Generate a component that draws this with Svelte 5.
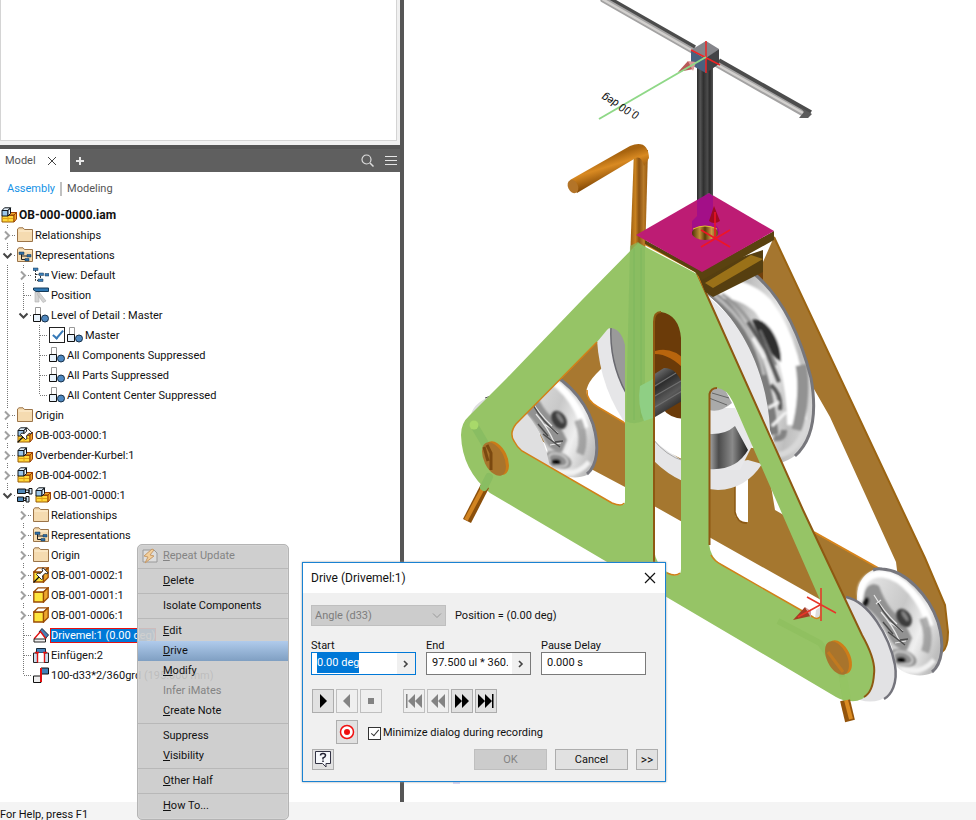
<script>
  import { onMount } from 'svelte';

  let startField;
  onMount(() => {
    startField.focus({ preventScroll: true });
    startField.select();
  });

  const tree = [
    { rails: ['>'], icons: ['folder'], text: 'Relationships' },
    { rails: ['v'], icons: ['reps'], text: 'Representations' },
    { rails: ['|', '>first'], icons: ['view'], text: 'View: Default' },
    { rails: ['|', 't'], icons: ['position'], text: 'Position' },
    { rails: ['|', 'vlast'], icons: ['lod'], text: 'Level of Detail : Master' },
    { rails: ['|', '', 't'], check: true, icons: ['lod'], text: 'Master' },
    { rails: ['|', '', 't'], icons: ['lod'], text: 'All Components Suppressed' },
    { rails: ['|', '', 't'], icons: ['lod'], text: 'All Parts Suppressed' },
    { rails: ['|', '', 'l'], icons: ['lod'], text: 'All Content Center Suppressed' },
    { rails: ['>'], icons: ['folder'], text: 'Origin' },
    { rails: ['>'], icons: ['asmpin'], text: 'OB-003-0000:1' },
    { rails: ['>'], icons: ['asm'], text: 'Overbender-Kurbel:1' },
    { rails: ['>'], icons: ['asm'], text: 'OB-004-0002:1' },
    { rails: ['vlast'], icons: ['flex', 'asm'], text: 'OB-001-0000:1' },
    { rails: ['', '>'], icons: ['folder'], text: 'Relationships' },
    { rails: ['', '>'], icons: ['reps'], text: 'Representations' },
    { rails: ['', '>'], icons: ['folder'], text: 'Origin' },
    { rails: ['', '>'], icons: ['partpin'], text: 'OB-001-0002:1' },
    { rails: ['', '>'], icons: ['part'], text: 'OB-001-0001:1' },
    { rails: ['', '>'], icons: ['part'], text: 'OB-001-0006:1' },
    { rails: ['', 't'], icons: ['angle'], text: 'Drivemel:1 (0.00 deg)', selected: true },
    { rails: ['', 't'], icons: ['insert'], text: 'Einfügen:2' },
    { rails: ['', 'l'], icons: ['mate'], text: '100-d33*2/360grd (195.000 mm)' }
  ];

  const menu = [
    [{ key: 'R', rest: 'epeat Update', off: true, icon: true }],
    [{ key: 'D', rest: 'elete' }],
    [{ key: '', rest: 'Isolate Components' }],
    [
      { key: 'E', rest: 'dit' },
      { key: 'D', rest: 'rive', active: true },
      { key: 'M', rest: 'odify' },
      { key: '', rest: 'Infer iMates', off: true },
      { key: 'C', rest: 'reate Note' }
    ],
    [{ key: '', rest: 'Suppress' }, { key: 'V', rest: 'isibility' }],
    [{ key: 'O', rest: 'ther Half' }],
    [{ key: 'H', rest: 'ow To...' }]
  ];
</script>

{#snippet rail(kind)}
  <svg class="rail" width="16" height="20" viewBox="0 0 16 20" aria-hidden="true">
    {#if kind === '|' || kind === 't' || kind.startsWith('>')}
      <path class="dots" d="M7.500 0V20" />
    {:else if kind !== ''}
      <path class="dots" d="M7.500 0V10" />
    {/if}
    {#if kind !== '|' && kind !== ''}
      <path class="dots" d="M8 10.500H16" />
    {/if}
    {#if kind.startsWith('>')}
      <path d="M3 4h8v13H3z" fill="#fff" /><path d="M5 6.500l4 4-4 4" fill="none" stroke="#a0a0a0" stroke-width="2" />
    {:else if kind.startsWith('v')}
      <path d="M2 6h11v9H2z" fill="#fff" /><path d="M3.500 8.500l4 4 4-4" fill="none" stroke="#454545" stroke-width="2" />
    {/if}
  </svg>
{/snippet}

{#snippet icon(name)}
  <svg class="icon" width="16" height="16" viewBox="0 0 16 16" aria-hidden="true">
    {#if name === 'folder' || name === 'reps'}
      <path d="M.5 14.500V2L2 .8H6L7.500 2.500H15.500V14.500Z" fill="#f5dbb0" stroke="#9b7449" />
      <path d="M1.500 4H15" stroke="#fff0d4" />
    {/if}
    {#if name === 'reps'}
      <path d="M4.500 7V12.500H9M4.500 9H10" fill="none" stroke="#222" />
      <path d="M2 5h5v2.500H2zM10 7.500h4v2.500h-4zM8 11.500h4V14H8z" fill="#2c6ca5" stroke="#17344e" stroke-width=".5" />
    {:else if name === 'view'}
      <path d="M2.500 3V13.500H7M2.500 7.500H7M7.500 6V12" fill="none" stroke="#333" stroke-dasharray="2 1" />
      <path d="M0 1h5v2.500H0zM6 6h4.500v2.500H6zM12 6.500h4v2.500h-4zM5 12h5v2.500H5z" fill="#3c7fb9" stroke="#17344e" stroke-width=".5" />
    {:else if name === 'position'}
      <path d="M2 5h4v10H2zM6 5l7 9-3 1.500L4 7z" fill="#d4d4d4" stroke="#b0b0b0" stroke-width=".6" />
      <path d="M.5 1H15.500V4.500H3L.5 3z" fill="#2f78b4" stroke="#163a58" />
    {:else if name === 'lod'}
      <path d="M2.500 .5h5v7h-5z" fill="#fff" stroke="#999" />
      <path d="M.5 7.500h7v7h-7z" fill="#e8f2fb" stroke="#111" />
      <circle cx="12" cy="11.500" r="3.500" fill="#4f88c0" stroke="#16304a" />
    {:else if name === 'asm' || name === 'asmpin'}
      <path d="M1 8.500h12V15H1z" fill="#ffd83a" stroke="#9a5a05" /><path d="M7 9v6M1.500 11.500h11" stroke="#e0a015" />
      <path d="M8 8l2-2.500h5.500L13 8zM13 8l2.500-2.500V12L13 15z" fill="#f0a92c" stroke="#9a3f05" />
      <path d="M1 3.500h6V9H1z" fill="#9cc7ea" stroke="#10161c" /><path d="M1 3.500L3.500.8H9.500L7 3.500zM7 3.500L9.500.8V6.500L7 9z" fill="#e5f1fb" stroke="#10161c" />
    {:else if name === 'part' || name === 'partpin'}
      <path d="M.8 5h9.700v10H.8z" fill="#fde53c" stroke="#9a4b05" stroke-width="1.300" />
      <path d="M.8 5L5 .8h10.200L10.500 5z" fill="#fff" stroke="#9a4b05" stroke-width="1.300" />
      <path d="M10.500 5L15.200.8V10.500L10.500 15z" fill="#eca72e" stroke="#9a4b05" stroke-width="1.300" />
    {:else if name === 'flex'}
      <path d="M.5 2h8v4.500h-8zM.5 10h6v4.500h-6z" fill="#4e87b9" stroke="#111" />
      <path d="M8.500 3H12V5.500H8.500zM6.500 11H9V13.500H6.500zM12 1.500h3V7H12zM9 9.500h3V15H9z" fill="#c9dff2" stroke="#111" />
    {:else if name === 'angle'}
      <path d="M6 5L9 1.500 15.500 8 12 12z" fill="#4a7fb5" stroke="#17283c" />
      <path d="M1 12L7.500 4.500 13 12" fill="#fff" stroke="#e01010" stroke-width="1.400" /><path d="M1 12h11.500v3H1z" fill="#eee" stroke="#222" />
    {:else if name === 'insert'}
      <path d="M.5 6h15v9.500H.5z" fill="#c9ddee" stroke="#222" /><path d="M3.500 1.500h9V6h-9z" fill="#4684bc" stroke="#15293c" />
      <path d="M5 6h6v9.500H5z" fill="#fff" /><path d="M4.500 5.500v10M11.500 5.500v10M2 5.500h4M10 5.500h4" stroke="#e01010" stroke-width="1.400" />
    {:else if name === 'mate'}
      <path d="M8 1h7.500v6H8z" fill="#3e80b8" stroke="#111" /><path d="M.5 9H8v6.500H.5z" fill="#eee" stroke="#111" />
      <path d="M8 1V15" stroke="#e01010" stroke-width="2" />
    {/if}
    {#if name.endsWith('pin')}
      <path d="M.5 15.500L6 10" stroke="#111" stroke-width="1.300" />
      <path d="M10 .8l5.200 5.200-2 .8-1-.6L9.500 9l.5 2.500-1.500 1L3.500 7.500l1.200-1.500 2.500.5L9.800 4 9.200 2.500z" fill="#fff" stroke="#222" />
    {/if}
  </svg>
{/snippet}

{#snippet smallWheel()}
  <path d="M857 602C856 580 868 568 882 568.500C906 570 927 594 937 622C944 643 943 662 932 673C921 678 905 675 897 667C893 640 880 618 857 602Z" fill="url(#chromeSmall)" />
  <g filter="url(#soft)">
    <path d="M862 600C857 583 869 573 883 574C904 577 922 600 930 626" fill="none" stroke="#fff" stroke-width="7" />
    <path d="M903 668Q920 676 934 660" fill="none" stroke="#f2f2f2" stroke-width="5" />
    <path d="M864 606C861 590 870 580 879 586Q884 600 892 610Q905 622 912 638L907 650Q894 650 888 634Q879 616 864 606Z" fill="#929292" />
    <ellipse cx="904" cy="618" rx="7" ry="10" fill="#3c3c3c" transform="rotate(-32 904 618)" />
    <ellipse cx="905" cy="616" rx="2" ry="6" fill="#858585" transform="rotate(-32 905 616)" />
    <ellipse cx="903" cy="658" rx="14" ry="8" fill="#8e8e8e" transform="rotate(20 903 658)" />
    <ellipse cx="903" cy="658" rx="10" ry="6" fill="none" stroke="#ddd" stroke-width="1.500" transform="rotate(20 903 658)" />
    <ellipse cx="901" cy="660" rx="5" ry="3" fill="#111" />
    <path d="M923 618Q931 636 925 652" fill="none" stroke="#868686" stroke-width="8" opacity=".65" />
    <ellipse cx="866" cy="602" rx="3" ry="5" fill="#161616" transform="rotate(20 866 602)" />
  </g>
  <path d="M874 595Q884 612 897 624M881 612Q893 626 899 640M889 622L903 631M895 643L906 641M876 604L881 600" fill="none" stroke="#e6e6e6" stroke-width="1.200" />
  <path d="M878 603Q887 619 903 632M888 632L905 645M883 622L893 634M900 640L908 639" fill="none" stroke="#4b4b4b" stroke-width="1.400" />
  <path d="M873 570Q878 568 882 569C906 570 929 596 938 622C945 645 942 664 932 672" fill="none" stroke="#77777e" stroke-width="3" />
{/snippet}

<div class="app">
  <aside class="side">
    <div class="blank"><div class="sheet"></div></div>
    <header class="tabs">
      <div class="tab">Model
        <button class="bare" aria-label="Close Model"><svg width="10" height="10" viewBox="0 0 10 10"><path d="M1 1l8 8M9 1L1 9" stroke="#444" /></svg></button>
      </div>
      <button class="bare plus" aria-label="Add panel"><svg width="10" height="10" viewBox="0 0 10 10"><path d="M5 1v8M1 5h8" stroke="#e6e6e6" stroke-width="2" /></svg></button>
      <span class="grow"></span>
      <button class="bare" aria-label="Search"><svg width="13" height="13" viewBox="0 0 13 13"><circle cx="5.500" cy="5.500" r="4.500" fill="none" stroke="#ddd" stroke-width="1.200" /><path d="M9 9l3.500 3.500" stroke="#ddd" stroke-width="1.500" /></svg></button>
      <button class="bare list" aria-label="Panel menu"><svg width="12" height="10" viewBox="0 0 12 10"><path d="M0 .5h12M0 4.500h12M0 8.500h12" stroke="#e6e6e6" /></svg></button>
    </header>
    <nav class="modes"><a class="on" href="#assembly">Assembly</a><i></i><a href="#modeling">Modeling</a></nav>

    <ul class="tree">
      <li class="row root">{@render icon('asm')}<span class="text">OB-000-0000.iam</span></li>
      {#each tree as node}
        <li class="row">
          {#each node.rails as kind}{@render rail(kind)}{/each}
          {#if node.check}<input class="tick blue" type="checkbox" checked aria-label="Master active" />{/if}
          {#each node.icons as name}{@render icon(name)}{/each}
          <span class="text" class:selected={node.selected}>{node.text}</span>
        </li>
      {/each}
    </ul>
  </aside>

  <div class="splitter"></div>

  <main class="view">
    <svg width="572" height="801" viewBox="404 0 572 801" role="img" aria-label="Bender assembly">
      <defs>
        <linearGradient id="chromeSmall" x1="0" y1=".2" x2="1" y2=".7"><stop offset="0" stop-color="#e8e8e8" /><stop offset=".5" stop-color="#c8c8c8" /><stop offset=".75" stop-color="#efefef" /><stop offset="1" stop-color="#bdbdbd" /></linearGradient>
        <linearGradient id="chromeBig" x1="0" y1=".3" x2="1" y2=".6"><stop offset="0" stop-color="#777" /><stop offset=".35" stop-color="#c4c4c4" /><stop offset=".6" stop-color="#e9e9e9" /><stop offset=".8" stop-color="#bebebe" /><stop offset="1" stop-color="#d9d9d9" /></linearGradient>
        <linearGradient id="post"><stop offset="0" stop-color="#292929" /><stop offset=".2" stop-color="#555" /><stop offset=".4" stop-color="#303030" /><stop offset=".65" stop-color="#4b4b4b" /><stop offset=".8" stop-color="#2c2c2c" /><stop offset="1" stop-color="#555" /></linearGradient>
        <linearGradient id="crank"><stop offset="0" stop-color="#9a5c10" /><stop offset=".3" stop-color="#c98220" /><stop offset=".5" stop-color="#8a5212" /><stop offset=".75" stop-color="#b87a28" /><stop offset="1" stop-color="#9a5a0c" /></linearGradient>
        <linearGradient id="arm" x1=".4" y1=".3" x2=".6" y2=".7"><stop offset="0" stop-color="#a8640f" /><stop offset=".4" stop-color="#d98a22" /><stop offset="1" stop-color="#8a4e08" /></linearGradient>
        <linearGradient id="axle" x1="0" y1="0" x2=".6" y2="1"><stop offset="0" stop-color="#222" /><stop offset=".25" stop-color="#666" /><stop offset=".45" stop-color="#2d2d2d" /><stop offset=".7" stop-color="#5a5a5a" /><stop offset="1" stop-color="#222" /></linearGradient>
        <linearGradient id="hub"><stop offset="0" stop-color="#aaa" /><stop offset=".25" stop-color="#4c4c4c" /><stop offset=".6" stop-color="#8a8a8a" /><stop offset=".85" stop-color="#444" /><stop offset="1" stop-color="#222" /></linearGradient>
        <linearGradient id="bore"><stop offset="0" stop-color="#4c3306" /><stop offset=".3" stop-color="#c39037" /><stop offset=".5" stop-color="#5a3b08" /><stop offset=".75" stop-color="#cc9a45" /><stop offset="1" stop-color="#6a480d" /></linearGradient>
        <filter id="soft" x="-20%" y="-20%" width="140%" height="140%"><feGaussianBlur stdDeviation="1.200" /></filter>
        <clipPath id="bigWheel"><path d="M707 294L752 272C781 295 800 335 811 378C817 412 813 448 788 460L781 463 770 430C768 380 746 325 707 294Z" /></clipPath>
      </defs>

      <!-- rear plate -->
      <path d="M540 400L598 341 625 310V487L593 470 540 440Z" fill="#a87830" />
      <path d="M625 345L600 370Q582 387 588 397Q591 403 600 408L625 423Z" fill="#fff" />
      <path d="M587 390Q586 400 598 407L625 423" fill="none" stroke="#d8841a" stroke-width="1.500" />
      <path d="M640 430L765 450 775 510 815 533 878 568 898 580 860 622 709 537 654 506 640 497Z" fill="#a5772f" />
      <path d="M814 532L880 569" stroke="#d8841a" stroke-width="2" />
      <path d="M735 480V515Q738 524 748 522V475Z" fill="#fff" /><path d="M735 480V512Q737 523 747 523" fill="none" stroke="#8b5812" stroke-width="1.500" />
      <path d="M763 262L774 237 925 558 945 605 948 632Q948 648 940 654L880 600 878 570 898 578 896 562 830 417 763 300Z" fill="#a5762f" />
      <path d="M774 237L925 558 945 605 948 632Q948 648 942 652" fill="none" stroke="#9b6412" stroke-width="2" />
      <path d="M757 262L763 258V300L757 300Z" fill="#71400c" />

      <!-- left wheel -->
      <path d="M470 418Q472 404 489 397L495 410 480 425Z" fill="#dedee0" /><path d="M485 398l6-2" stroke="#555" />
      <g transform="translate(-345 -198)">{@render smallWheel()}</g>
      <path d="M510 442L510 428 527 414Q545 436 550 468L525 458Z" fill="#dfdfe0" />

      <!-- main wheel -->
      <path d="M597 340L611 326 630 330V430Q600 390 597 340Z" fill="#e6e6e8" />
      <path d="M611 325Q609 362 626 393V325Z" fill="#9a9a9a" stroke="#6a6a70" stroke-width="1.500" />
      <path d="M654 439Q670 452 681 460L709 467 748 460 762 464Q746 489 718 490Q680 487 654 461Z" fill="#e5e5e7" />
      <path d="M650 418L690 412V462Q668 455 652 438Z" fill="#fff" /><path d="M652 438Q666 456 684 461" fill="none" stroke="#aaa" />
      <path d="M705 408H735L745 428 755 440 740 470H705Z" fill="#e8e8ea" />
      <path d="M709 434Q725 435 735 426L748 450Q736 471 709 469Z" fill="url(#hub)" />
      <path d="M709 388H724L732 403Q720 413 709 410Z" fill="#aaa" /><path d="M709 398L727 405M712 393L729 398" stroke="#666" />
      <path d="M706 295Q745 325 762 375Q770 405 770 440L758 425Z" fill="#e8e8ea" />
      <g clip-path="url(#bigWheel)">
        <path d="M700 265H820V470H700Z" fill="url(#chromeBig)" />
        <g filter="url(#soft)">
          <path d="M716 288Q745 288 763 306Q796 350 797 425" fill="none" stroke="#fff" stroke-width="20" />
          <path d="M801 365Q806 395 797 430" fill="none" stroke="#929292" stroke-width="11" />
          <path d="M708 295C744 321 764 368 771 435" fill="none" stroke="#7b7b7b" stroke-width="15" />
          <path d="M714 295C740 315 757 340 764 375" fill="none" stroke="#bfbfbf" stroke-width="3" />
          <path d="M722 294Q745 308 763 345" fill="none" stroke="#979797" stroke-width="3" />
          <path d="M752 320C768 316 782 343 781 362C772 356 760 340 752 320Z" fill="#2e2e2e" />
          <path d="M748 322L766 350 779 382M771 385Q782 395 780 410" fill="none" stroke="#555" stroke-width="4" />
          <path d="M760 330L776 365" stroke="#777" stroke-width="2" />
          <path d="M753 338L764 358M768 408L779 402M772 426L786 412" stroke="#f5f5f5" stroke-width="3" />
          <path d="M774 438Q784 440 784 430" fill="none" stroke="#828282" stroke-width="6" />
          <path d="M778 455Q800 452 808 420" fill="none" stroke="#d8d8d8" stroke-width="6" />
        </g>
      </g>
      <path d="M752 272C781 295 800 335 811 378C817 412 813 440 795 456" fill="none" stroke="#77777c" stroke-width="3" />

      <!-- right wheel -->
      {@render smallWheel()}
      <path d="M846 597C869 602 889 635 895 665C898 684 891 695 880 700Q870 703 860 700L840 650Z" fill="#e2e2e4" />
      <path d="M846 597C869 602 889 635 895 665C898 684 891 695 884 699" fill="none" stroke="#74747c" stroke-width="2.500" />

      <!-- shaft behind the centre slot -->
      <path d="M650 305H685V419Q670 419 662 408L650 400Z" fill="#6b3b09" />
      <path d="M655 351Q672 346 686 361V371Q670 354 655 354Z" fill="#b8650d" />
      <path d="M640 383L664 368Q677 368 682 384V401L650 420Q638 418 640 383Z" fill="url(#axle)" />
      <path d="M645 392L676 373M648 400L681 381M650 410L682 391" stroke="#707070" stroke-width="1.200" />
      <path d="M816 610L820 607V619H815Z" fill="#ddd" />

      <!-- lifting crank -->
      <path d="M634 150H648L645 260H630Z" fill="url(#crank)" />
      <path d="M570 180L630 146Q648 139 649 158L644 166Q641 154 634 159L577 193Z" fill="url(#arm)" />
      <ellipse cx="573" cy="186.500" rx="5" ry="7" fill="#b37428" transform="rotate(-25 573 186.500)" />

      <!-- front plate -->
      <path fill-rule="evenodd" fill="#96c466" d="M638 243L697 274 710 301 803 510 862 635Q876 660 874 674Q872 703 850 701Q843 701 836 697L490 493Q462 470 461 435Q461 423 469 416L506 379 582 300Z
        M607 330L597 342 516 424Q509 433 514 441Q517 447 522 451L612 503Q625 508 625 501V345Q621 329 611 328Q608 328 607 330Z
        M654 322V550Q656 565 667 572Q681 580 681 569V338Q679 315 661 312Q654 312 654 322Z
        M709 394V543Q710 558 722 565L813 617Q820 620 820 613V600L733 402Q726 388 717 388Q709 387 709 394Z" />
      <path d="M597 342L516 424Q509 433 514 441Q517 447 522 451L612 503Q622 507 624 503M667 573Q676 577 680 573M711 555Q714 561 722 565L813 617Q817 620 820 617" fill="none" stroke="#d18019" stroke-width="1.500" />
      <path d="M654 566V322Q654 312 661 312M709.500 545V394Q711 388 717 388M697 273L803 510 862 635Q876 660 874 674Q873 692 864 697" fill="none" stroke="#8e5912" stroke-width="2" />
      <path d="M645 244L697 272 706 292" fill="none" stroke="#d8841a" stroke-width="2" />
      <path d="M630 246L638 242 645 247V420Q635 426 626 421Z" fill="#84bb60" opacity=".7" /><path d="M634 248V420M641 248V418" stroke="#79b55d" opacity=".7" />
      <path d="M640 386L653 379V418L644 421Q637 405 640 386Z" fill="#8fcf84" />

      <!-- pins and handles -->
      <path d="M485 486L467 521" stroke="#8b4f0b" stroke-width="9" /><path d="M484 486L466 520" stroke="#d28421" stroke-width="4" />
      <path d="M474 425L487 447M489 477L484 487" stroke="#89bd62" stroke-width="8" stroke-linecap="round" /><circle cx="474" cy="425" r="4.500" fill="#a8d96a" />
      <ellipse cx="497" cy="458" rx="10" ry="18" fill="#cb7c18" transform="rotate(-26 497 458)" /><ellipse cx="494" cy="459" rx="10" ry="18" fill="#a8742c" transform="rotate(-26 494 459)" />
      <path d="M487 445L491 453V470M484 447L488 461" fill="none" stroke="#7a4910" stroke-width="3" />
      <path d="M778 621L820 643 842 675 846 700" fill="none" stroke="#90c060" stroke-width="6" />
      <ellipse cx="840" cy="657" rx="10" ry="18" fill="#ce7d18" transform="rotate(-26 840 657)" /><ellipse cx="837" cy="658" rx="10" ry="18" fill="#a8742c" transform="rotate(-26 837 658)" />
      <path d="M828 652L843 672" stroke="#c17a20" stroke-width="3" />
      <path d="M845 700L850 721" stroke="#94540b" stroke-width="10" /><path d="M846 700L851 719" stroke="#db8b22" stroke-width="4" /><path d="M843 677L847 700" stroke="#94c463" stroke-width="8" />

      <!-- top block -->
      <path d="M697 272L763 250V272L713 297 705 292Z" fill="#563f10" /><path d="M705 283L751 255 763 259 713 288Z" fill="#9a7118" />
      <path d="M645 240L702 271 774 231V240L702 280 695 272 645 244Z" fill="#5a4210" />
      <path d="M709 193L774 231 702 272 636 235Z" fill="#bd1c74" />
      <path d="M697 198L709 193 713 196V223Q722 229 718 235H692V221L697 216Z" fill="#a30f88" />
      <ellipse cx="705" cy="233" rx="13" ry="7" fill="url(#bore)" /><path d="M693 229Q705 223 717 229" fill="none" stroke="#e0c52e" />
      <path d="M714 206L709 221Q714 225 720 221Z" fill="#a00a20" />
      <path d="M715 212V238M701 230L730 247M701 247L730 230" stroke="#f01525" stroke-width="1.500" />

      <!-- post, cross bar and knob -->
      <path d="M697 65H713V196L709 193 697 200Z" fill="url(#post)" />
      <path d="M601 -4L694 49M718 62L810 114" stroke="#4c4c4c" stroke-width="8" />
      <path d="M602 -1L693 51M716 64L804 114" stroke="#a3a2a2" stroke-width="6" /><path d="M602 -1L693 51M716 64L803 113" stroke="#d2d0ce" stroke-width="2.500" />
      <path d="M800 107L812 114 808 118H799L804 112Z" fill="#5b5b5b" />
      <path d="M706 41L719 49 706 59 691 50Z" fill="#85858a" /><path d="M691 50L706 59V73L691 65Z" fill="#49617f" /><path d="M719 49V64L706 73V58Z" fill="#434347" />
      <path d="M678 72L688 61 694 69Z" fill="#b85858" /><path d="M688 61L696 62 693 71Z" fill="#dc9797" />
      <path d="M706 41V73M691 50L720 65" stroke="#f12424" stroke-width="1.500" />
      <path d="M706 57L599 119" stroke="#8fd887" stroke-width="2" />
      <text x="0" y="0" transform="translate(640 113) rotate(209)" font-size="11" font-style="italic" fill="#111">0.00 deg</text>

      <!-- joint marker -->
      <path d="M793 620L805 607 811 616Z" fill="#a43c23" /><path d="M805 607L811 611V618Z" fill="#d59c9c" />
      <path d="M821 588V621M807 597L836 613M820 605L798 617" stroke="#e73529" stroke-width="1.500" />
      <path d="M453 783H460" stroke="#b5b3f0" />
    </svg>
  </main>

  <footer class="status">For Help, press F1</footer>

  <div class="menu" role="menu">
    {#each menu as group}
      <div class="group">
        {#each group as item}
          <button class="item" class:active={item.active} role="menuitem" disabled={item.off}>
            {#if item.icon}
              <svg class="bolt" width="16" height="16" viewBox="0 0 16 16" aria-hidden="true"><path d="M1 2h11l3 3v9H1z" fill="#ddd" stroke="#999" /><path d="M10 1L2 8l4 1-3 6 9-7-4-1 4-5z" fill="#f3cf9a" stroke="#c79a68" /></svg>
            {/if}
            <u>{item.key}</u>{item.rest}
          </button>
        {/each}
      </div>
    {/each}
  </div>

  <form class="dialog" onsubmit={(e) => e.preventDefault()}>
    <div class="title">Drive (Drivemel:1)
      <button type="button" class="bare" aria-label="Close"><svg width="12" height="12" viewBox="0 0 12 12"><path d="M1 1l10 10M11 1L1 11" stroke="#111" stroke-width="1.200" /></svg></button>
    </div>
    <div class="body">
      <div class="line">
        <span class="combo">
          <select disabled aria-label="Driven parameter"><option>Angle (d33)</option></select>
          <svg width="10" height="6" viewBox="0 0 10 6" aria-hidden="true"><path d="M1 .5l4 4 4-4" fill="none" stroke="#999" /></svg>
        </span>
        <span>Position = (0.00 deg)</span>
      </div>
      <div class="line fields">
        <div class="field"><label for="start">Start</label>
          <div class="box focus"><input id="start" bind:this={startField} value="0.00 deg" /><button type="button" aria-label="Start options"><svg width="6" height="8" viewBox="0 0 6 8"><path d="M1 1l3 3-3 3" fill="none" stroke="#444" stroke-width="1.600" /></svg></button></div>
        </div>
        <div class="field"><label for="end">End</label>
          <div class="box"><input id="end" value="97.500 ul * 360.00 deg" /><button type="button" aria-label="End options"><svg width="6" height="8" viewBox="0 0 6 8"><path d="M1 1l3 3-3 3" fill="none" stroke="#444" stroke-width="1.600" /></svg></button></div>
        </div>
        <div class="field"><label for="pause">Pause Delay</label>
          <div class="box"><input id="pause" value="0.000 s" /></div>
        </div>
      </div>
      <div class="line media">
        <button type="button" aria-label="Forward"><svg width="18" height="18" viewBox="0 0 18 18"><path d="M6 2l7 7-7 7z" /></svg></button>
        <button type="button" aria-label="Reverse" disabled><svg width="18" height="18" viewBox="0 0 18 18"><path d="M12 2L5 9l7 7z" /></svg></button>
        <button type="button" aria-label="Stop" disabled><svg width="18" height="18" viewBox="0 0 18 18"><path d="M6 6h6v6H6z" /></svg></button>
        <span class="gap"></span>
        <button type="button" aria-label="Minimum" disabled><svg width="18" height="18" viewBox="0 0 18 18"><path d="M1 2h1.500v14H1zM10 2v14L3 9zM17 2v14l-7-7z" /></svg></button>
        <button type="button" aria-label="Reverse step" disabled><svg width="18" height="18" viewBox="0 0 18 18"><path d="M9 2v14L2 9zM16 2v14L9 9z" /></svg></button>
        <button type="button" aria-label="Forward step"><svg width="18" height="18" viewBox="0 0 18 18"><path d="M2 2v14l7-7zM9 2v14l7-7z" /></svg></button>
        <button type="button" aria-label="Maximum"><svg width="18" height="18" viewBox="0 0 18 18"><path d="M1 2v14l7-7zM8 2v14l7-7zM15 2h1.500v14H15z" /></svg></button>
      </div>
      <div class="line record">
        <button type="button" aria-label="Record"><svg width="16" height="16" viewBox="0 0 16 16"><circle cx="8" cy="8" r="6.500" fill="#fff" stroke="#f01010" stroke-width="1.500" /><circle cx="8" cy="8" r="3" fill="#f01010" /></svg></button>
        <label><input class="tick" type="checkbox" checked />Minimize dialog during recording</label>
      </div>
      <div class="line actions">
        <button type="button" class="small" aria-label="Help"><svg width="16" height="17" viewBox="0 0 16 17"><path d="M.5.5h15v12H11V16L7.500 12.500H.5z" fill="#f6f8fb" stroke="#334" /><path d="M5.500 4.500q0-2 2.500-2t2.500 2q0 1.500-2.500 2.500V8.500M8 9.500V11" fill="none" stroke="#223" stroke-width="1.500" /></svg></button>
        <span class="grow"></span>
        <button type="submit" disabled>OK</button>
        <button type="button">Cancel</button>
        <button type="button" class="small more">&gt;&gt;</button>
      </div>
    </div>
  </form>
</div>

<style>
  :global(body) { margin: 0; }
  .app {
    position: relative;
    display: grid;
    grid-template-columns: 400px 4px 1fr;
    grid-template-rows: 1fr 18px;
    min-height: 100vh;
    overflow: hidden;
    background: #fff;
    color: #111;
    font: 11px/20px Roboto, "Noto Sans", sans-serif;
  }
  button, input, select { font: inherit; color: inherit; box-sizing: border-box; margin: 0; }
  .bare { display: flex; border: 0; padding: 0; background: none; }
  .grow { flex: 1; }

  .side { display: flex; flex-direction: column; }
  .blank { display: flex; height: 145px; padding: 0 3px 4px 0; box-sizing: border-box; background: #f0f0f0; }
  .sheet { flex: 1; background: #fff; border: solid #d4d4d4; border-width: 0 1px 1px; }
  .tabs { display: flex; align-items: center; height: 27px; box-sizing: border-box; padding: 4px 3px 0 0; background: #5f5f5f; box-shadow: inset 0 4px #545454; }
  .tab { display: flex; align-items: center; justify-content: space-between; width: 70px; height: 23px; padding: 0 13px 0 5px; box-sizing: border-box; background: #fff; color: #555; }
  .plus { margin-left: 5px; }
  .list { margin: 0 0 0 11px; }
  .modes { display: flex; align-items: center; gap: 5px; height: 33px; padding-left: 7px; }
  .modes a { color: #555; text-decoration: none; }
  .modes a.on { color: #1592e6; }
  .modes i { width: 2px; height: 14px; background: #c0c0c0; }

  .tree { list-style: none; margin: 0; padding: 0; }
  .row { display: flex; align-items: center; height: 20px; white-space: nowrap; }
  .rail { flex: none; }
  .dots { fill: none; stroke: #777; stroke-dasharray: 1 1; }
  .icon { flex: none; margin: 0 1px; }
  .text { padding: 0 1px; line-height: 15px; }
  .root { font-size: 12px; font-weight: bold; }
  .selected { background: #0078d7; color: #fff; outline: 1px solid #e81010; outline-offset: -1px; }

  .tick { appearance: none; width: 13px; height: 13px; margin: 0 2px 0 0; border: 1px solid #333; background: #fff; position: relative; }
  .tick::after { content: ""; position: absolute; left: 4px; top: 0; width: 3px; height: 7px; border: solid #333; border-width: 0 1px 1px 0; transform: rotate(40deg); }
  .tick.blue { width: 16px; height: 16px; margin: 0 1px; border-color: #222; }
  .tick.blue::after { left: 5px; top: 0; width: 4px; height: 9px; border-color: #3679b8; border-width: 0 2px 2px 0; }

  .splitter { background: #565656; }
  .view { overflow: hidden; }
  .view svg { display: block; }
  .status { grid-column: 1 / -1; background: #f4f4f4; line-height: 26px; overflow: hidden; }

  .menu { position: absolute; left: 137px; top: 544px; width: 152px; box-sizing: border-box; padding: 1px 0 3px; border: 1px solid #b4b4b4; border-radius: 5px; background: rgba(203, 203, 203, 0.92); box-shadow: inset 0 0 0 1px #d4d4d4; }
  .group + .group { border-top: 1px solid #b8b8b8; margin-top: 2px; padding-top: 2px; }
  .item { display: flex; align-items: center; position: relative; width: 150px; height: 20px; margin: 0; padding: 0 0 0 25px; border: 0; background: none; color: #111; }
  .item:disabled { color: #848484; }
  .item.active { background: linear-gradient(#b0cbec, #7f9fc2); }
  .bolt { position: absolute; left: 4px; top: 2px; }

  .dialog { position: absolute; left: 302px; top: 562px; width: 364px; box-sizing: border-box; border: 1px solid #1a82d2; background: #f0f0f0; box-shadow: 0 0 2px #999; }
  .title { display: flex; align-items: center; justify-content: space-between; height: 30px; padding: 0 9px 0 8px; background: #fff; font-size: 12px; }
  .body { padding: 12px 7px 11px 8px; }
  .line { display: flex; align-items: center; }
  .combo { position: relative; display: flex; width: 135px; margin-right: 9px; }
  .combo svg { position: absolute; right: 4px; top: 8px; }
  select { appearance: none; width: 100%; height: 21px; padding: 0 3px; border: 1px solid #bfbfbf; border-radius: 0; background: #ccc; color: #7d7d7d; opacity: 1; }
  .fields { gap: 10px; margin-top: 13px; }
  .field { width: 105px; }
  .field label { display: block; line-height: 13px; }
  .box { display: flex; height: 23px; box-sizing: border-box; border: 1px solid #7a7a7a; background: #fff; }
  .box.focus { border-color: #0078d7; }
  .box input { flex: 1; min-width: 0; border: 0; padding: 0 4px 2px 5px; outline: 0; background: none; }
  .box input::selection { background: #0078d7; color: #fff; }
  .box button { display: flex; align-items: center; justify-content: center; width: 18px; border: 0; padding: 0; background: #f0f0f0; }
  .media { gap: 2px; margin: 14px 0 0 1px; }
  .gap { width: 17px; }
  .media button, .record button { display: flex; align-items: center; justify-content: center; width: 22px; height: 24px; padding: 0; border: 1px solid #adadad; background: #e1e1e1; }
  .media button:disabled { fill: #838383; background: #efefef; border-color: #bfbfbf; }
  .record { gap: 10px; margin: 7px 0 0 25px; }
  .record label { display: flex; align-items: center; padding-top: 2px; }
  .actions { gap: 8px; margin: 5px 0 0 1px; }
  .actions button { width: 73px; height: 21px; padding: 0; border: 1px solid #adadad; background: #e1e1e1; line-height: 18px; }
  .actions button:disabled { background: #ccc; border-color: #bfbfbf; color: #838383; }
  .actions .small { display: flex; align-items: center; justify-content: center; width: 22px; }
  .actions .more { font-size: 12px; }
</style>
